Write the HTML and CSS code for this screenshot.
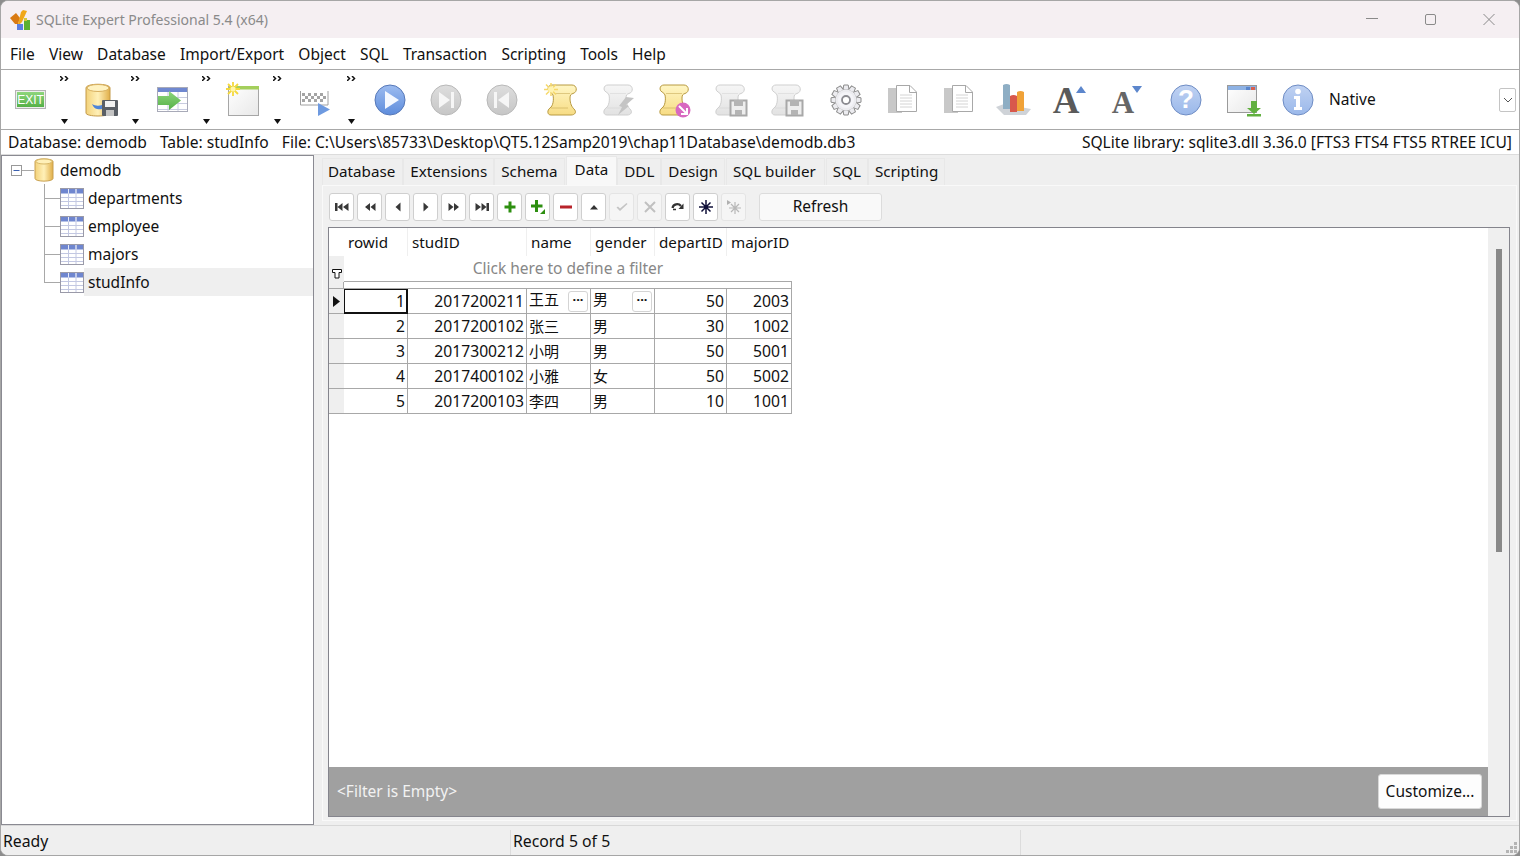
FILE: index.html
```html
<!DOCTYPE html>
<html lang="en">
<head>
<meta charset="utf-8">
<title>SQLite Expert Professional 5.4 (x64)</title>
<link rel="stylesheet" href="styles.css">
</head>
<body>
<svg class="defs" aria-hidden="true">
  <defs>
    <linearGradient id="gold" x1="0" y1="0" x2="1" y2="0"><stop offset="0" stop-color="#f3d27a"/><stop offset=".5" stop-color="#fff0b8"/><stop offset="1" stop-color="#e0ae48"/></linearGradient>
    <linearGradient id="paper" x1="0" y1="0" x2="0" y2="1"><stop offset="0" stop-color="#fff6c4"/><stop offset="1" stop-color="#f7dc84"/></linearGradient>
    <linearGradient id="ghost" x1="0" y1="0" x2="0" y2="1"><stop offset="0" stop-color="#f6f6f6"/><stop offset="1" stop-color="#e2e2e2"/></linearGradient>
    <linearGradient id="blueball" x1="0" y1="0" x2="0" y2="1"><stop offset="0" stop-color="#9dbcf0"/><stop offset="1" stop-color="#5d8cdc"/></linearGradient>
    <linearGradient id="lightball" x1="0" y1="0" x2="0" y2="1"><stop offset="0" stop-color="#c0d2f2"/><stop offset="1" stop-color="#9ab8ea"/></linearGradient>
    <linearGradient id="greyball" x1="0" y1="0" x2="0" y2="1"><stop offset="0" stop-color="#dedede"/><stop offset="1" stop-color="#c6c6c6"/></linearGradient>
    <linearGradient id="green" x1="0" y1="0" x2="0" y2="1"><stop offset="0" stop-color="#8ed67c"/><stop offset="1" stop-color="#55b048"/></linearGradient>
    <linearGradient id="win" x1="0" y1="0" x2="1" y2="1"><stop offset="0" stop-color="#ffffff"/><stop offset="1" stop-color="#e8e8e8"/></linearGradient>

    <symbol id="scroll" viewBox="0 0 40 40"><path d="M10 5H30C35 5 36 12 31 13.500C29 14 28 15 28 18C28 24 30 27 32 29C35 32 33 35 29 35H9C5 35 5 30 8 28C11 26 12 20 11 15C10 12 6 12 6 9C6 6 8 5 10 5Z"/><path d="M12 13.500H28M9 28H26" fill="none" stroke-opacity=".45"/></symbol>

    <path id="tooth" d="M17 9.500L17.800 5H22.200L23 9.500" fill="#ececf0" stroke="#8c8c8c"/>

    <symbol id="table16" viewBox="0 0 24 21">
      <rect x=".5" y=".5" width="23" height="20" fill="#fff" stroke="#9a9aa8"/>
      <rect x="1" y="1" width="22" height="4.500" fill="#6f86cf"/>
      <path d="M1 9.500H23M1 13.500H23M1 17.500H23" stroke="#c3c8e2"/>
      <path d="M8.500 1V20M16 1V20" stroke="#c3c8e2"/>
      <path d="M8.500 1V5.500M16 1V5.500" stroke="#e6ebf8"/>
    </symbol>

    <symbol id="nFirst" viewBox="0 0 14 14"><path d="M0 3h2.500v8H0zM7.500 3v8L2.500 7zM13.500 3v8L8 7z" fill="#383838"/></symbol>
    <symbol id="nPrevP" viewBox="0 0 14 14"><path d="M7 3v8L2 7zM12.500 3v8L7.500 7z" fill="#383838"/></symbol>
    <symbol id="nPrev" viewBox="0 0 14 14"><path d="M9.500 2.500v9L4.500 7z" fill="#383838"/></symbol>
    <symbol id="nNext" viewBox="0 0 14 14"><path d="M4.500 2.500v9L9.500 7z" fill="#383838"/></symbol>
    <symbol id="nNextP" viewBox="0 0 14 14"><path d="M1.500 3v8L6.500 7zM7 3v8l5-4z" fill="#383838"/></symbol>
    <symbol id="nLast" viewBox="0 0 14 14"><path d="M.5 3v8L6 7zM6.500 3v8l5-4zM11.500 3H14v8h-2.500z" fill="#383838"/></symbol>
    <symbol id="nPlus" viewBox="0 0 14 14"><path d="M5.500 1.500h3v4h4v3h-4v4h-3v-4h-4v-3h4z" fill="#2d8f10"/></symbol>
    <symbol id="nPlus2" viewBox="0 0 14 14"><path d="M4 0h3v4.500h4.500v3H7V12H4V7.500H-.5v-3H4z" fill="#2d8f10"/><path d="M14.500 8.500v5.500H9z" fill="#2d8f10"/></symbol>
    <symbol id="nMinus" viewBox="0 0 14 14"><path d="M1 5.500h12v3H1z" fill="#b8232a"/></symbol>
    <symbol id="nUp" viewBox="0 0 14 14"><path d="M3 9.500L7 5l4 4.500z" fill="#333"/></symbol>
    <symbol id="nCheck" viewBox="0 0 14 14"><path d="M1.500 7.500L5 11l7.500-7-1-1L5 8.500 3 6.500z" fill="#c4c4c4"/></symbol>
    <symbol id="nX" viewBox="0 0 14 14"><path d="M2 2l10 10M12 2L2 12" stroke="#c0c0c0" stroke-width="2"/></symbol>
    <symbol id="nRedo" viewBox="0 0 14 14"><path d="M1.500 8C2 4 7.500 3 10 6" fill="none" stroke="#333" stroke-width="2.200"/><path d="M12.500 3.500V9H7.500z" fill="#333"/><path d="M2 9.500h3" stroke="#333" stroke-width="1.500"/></symbol>
    <symbol id="nStar" viewBox="0 0 14 14"><path d="M7 0v14M0 7h14M2.500 2.500l9 9M11.500 2.500l-9 9" stroke="#10103a" stroke-width="1.500"/></symbol>
    <symbol id="nStar2" viewBox="0 0 14 14"><path d="M8 2v12M2 8h12M4 4l8 8M12 4l-8 8" stroke="#b8b8b8" stroke-width="1.200"/><path d="M0 0l4 2.500L0 5z" fill="#b0b0b0"/></symbol>
  </defs>
</svg>

<div class="window">
  <header class="titlebar">
    <svg class="logo" viewBox="0 0 20 20">
      <path d="M0 8L6 3l4 5-2 6-3 0z" fill="#d97a12"/>
      <path d="M8 14L11 2l2-2 4 1-5 11-3 3z" fill="#f0a818"/>
      <rect x="7" y="14" width="6" height="6" fill="#5a7fe0"/>
      <rect x="14" y="10" width="6" height="10" fill="#5cb030"/>
      <rect x="14" y="8" width="3" height="3" fill="#d8c838"/>
    </svg>
    <span class="title-text">SQLite Expert Professional 5.4 (x64)</span>
    <div class="winctl">
      <svg viewBox="0 0 58 20"><path d="M22 8.500H34" stroke="#8a8a8a"/></svg>
      <svg viewBox="0 0 58 20"><rect x="23.500" y="4.500" width="10" height="10" rx="1.500" fill="none" stroke="#8a8a8a"/></svg>
      <svg viewBox="0 0 58 20"><path d="M23.500 4l11 11M34.500 4l-11 11" stroke="#8a8a8a"/></svg>
    </div>
  </header>

  <nav class="menubar">
    <span>File</span><span>View</span><span>Database</span><span>Import/Export</span><span>Object</span><span>SQL</span><span>Transaction</span><span>Scripting</span><span>Tools</span><span>Help</span>
  </nav>

  <div class="toolbar">
    <div class="tbi">
      <div class="tbi-main">
        <svg class="ic" viewBox="0 0 40 40"><rect x="4.500" y="10.500" width="30" height="18" fill="#eee" stroke="#b4b4b4"/><rect x="6" y="12" width="27" height="15" fill="url(#green)"/><text x="19.500" y="24" class="exit-t">EXIT</text></svg>
      </div>
      <div class="tbi-side"><svg class="chev" viewBox="0 0 10 5"><path d="M0 0l2.500 2.500L0 5M5 0l2.500 2.500L5 5" fill="none" stroke="#111" stroke-width="1.500"/></svg><svg class="drop" viewBox="0 0 7 5"><path d="M0 0h7L3.500 5z" fill="#111"/></svg></div>
    </div>
    <div class="tbi">
      <div class="tbi-main">
        <svg class="ic" viewBox="0 0 40 40"><path d="M4 8c0-5 24-5 24 0v25c0 4-24 4-24 0z" fill="url(#gold)" stroke="#c49a48"/><ellipse cx="16" cy="8" rx="11" ry="3.500" fill="#fff2c0" stroke="#d8b060"/><path d="M10 24c2 5 6 6 10 5v3l6-5-6-5v3c-3 1-7 1-10-1z" fill="#4e84d8"/><rect x="20" y="20" width="16" height="16" rx="1" fill="#5a5f66"/><rect x="23" y="21" width="10" height="6" fill="#f2f2f2"/><rect x="24" y="30" width="8" height="6" fill="#c4c4c4"/></svg>
      </div>
      <div class="tbi-side"><svg class="chev" viewBox="0 0 10 5"><path d="M0 0l2.500 2.500L0 5M5 0l2.500 2.500L5 5" fill="none" stroke="#111" stroke-width="1.500"/></svg><svg class="drop" viewBox="0 0 7 5"><path d="M0 0h7L3.500 5z" fill="#111"/></svg></div>
    </div>
    <div class="tbi">
      <div class="tbi-main">
        <svg class="ic" viewBox="0 0 40 40"><rect x="4.500" y="7.500" width="30" height="24" fill="#fff" stroke="#a8aab8"/><rect x="5" y="8" width="29" height="4" fill="#7088d0"/><path d="M5 17.500H34M5 23.500H34M5 29.500H34M15 12V31M25 12V31" stroke="#c8cce0"/><path d="M5 16h11v-5l12 9.500L16 30v-5H5z" fill="url(#green)"/></svg>
      </div>
      <div class="tbi-side"><svg class="chev" viewBox="0 0 10 5"><path d="M0 0l2.500 2.500L0 5M5 0l2.500 2.500L5 5" fill="none" stroke="#111" stroke-width="1.500"/></svg><svg class="drop" viewBox="0 0 7 5"><path d="M0 0h7L3.500 5z" fill="#111"/></svg></div>
    </div>
    <div class="tbi">
      <div class="tbi-main">
        <svg class="ic" viewBox="0 0 40 40"><rect x="4.500" y="6.500" width="30" height="29" fill="url(#win)" stroke="#a6a6a6"/><rect x="5" y="6" width="30" height="3.500" fill="#a4cf5c"/><path d="M9 2v14M2 9h14M4 4l10 10M14 4L4 14" stroke="#f4d83c" stroke-width="1.800"/><circle cx="9" cy="9" r="2.500" fill="#fff6a8"/></svg>
      </div>
      <div class="tbi-side"><svg class="chev" viewBox="0 0 10 5"><path d="M0 0l2.500 2.500L0 5M5 0l2.500 2.500L5 5" fill="none" stroke="#111" stroke-width="1.500"/></svg><svg class="drop" viewBox="0 0 7 5"><path d="M0 0h7L3.500 5z" fill="#111"/></svg></div>
    </div>
    <div class="tbi tbi-wide">
      <div class="tbi-main">
        <svg class="ic" viewBox="0 0 40 40"><path d="M5.500 11v14H33V11" fill="#fff" stroke="#a0a0a0"/><path d="M7 13h3v3H7zM13 13h3v3h-3zM19 13h3v3h-3zM25 13h3v3h-3zM10 16h3v3h-3zM16 16h3v3h-3zM22 16h3v3h-3zM28 16h3v3h-3zM7 19h3v3H7zM13 19h3v3h-3zM19 19h3v3h-3zM25 19h3v3h-3z" fill="#a4a4a4"/><path d="M23 23l12 6.500L23 36z" fill="#6e9ae0"/></svg>
      </div>
      <div class="tbi-side"><svg class="chev" viewBox="0 0 10 5"><path d="M0 0l2.500 2.500L0 5M5 0l2.500 2.500L5 5" fill="none" stroke="#111" stroke-width="1.500"/></svg><svg class="drop" viewBox="0 0 7 5"><path d="M0 0h7L3.500 5z" fill="#111"/></svg></div>
    </div>

    <div class="tb first"><svg class="ic" viewBox="0 0 40 40"><circle cx="20" cy="20" r="15" fill="url(#blueball)" stroke="#5678b8"/><path d="M15 11l14 9-14 9z" fill="#f4f8ff"/></svg></div>
    <div class="tb"><svg class="ic" viewBox="0 0 40 40"><circle cx="20" cy="20" r="15" fill="url(#greyball)" stroke="#b8b8b8"/><path d="M13 12l11 8-11 8z" fill="#f6f6f6"/><rect x="25" y="12" width="3" height="16" fill="#f6f6f6"/></svg></div>
    <div class="tb"><svg class="ic" viewBox="0 0 40 40"><circle cx="20" cy="20" r="15" fill="url(#greyball)" stroke="#b8b8b8"/><path d="M27 12l-11 8 11 8z" fill="#f6f6f6"/><rect x="12" y="12" width="3" height="16" fill="#f6f6f6"/></svg></div>

    <div class="tb gap"><svg class="ic" viewBox="0 0 40 40"><use href="#scroll" fill="url(#paper)" stroke="#b89a40"/><path d="M9 3v13M2 9.500h14M4 4.500l10 10M14 4.500l-10 10" stroke="#f6d86a" stroke-width="1.500"/><circle cx="9" cy="9.500" r="3" fill="#fff3b0"/></svg></div>
    <div class="tb"><svg class="ic" viewBox="0 0 40 40"><use href="#scroll" fill="url(#ghost)" stroke="#cfcfcf"/><path d="M28 17l8 1-8 7 3 1-11 9 4-8-3-1z" fill="#c4c4c4"/></svg></div>
    <div class="tb"><svg class="ic" viewBox="0 0 40 40"><use href="#scroll" fill="url(#paper)" stroke="#b89a40"/><circle cx="29" cy="30" r="7.500" fill="#d868c0"/><path d="M25 26l8 8M33 28v6h-6" fill="none" stroke="#fff" stroke-width="2"/></svg></div>
    <div class="tb"><svg class="ic" viewBox="0 0 40 40"><use href="#scroll" fill="url(#ghost)" stroke="#cfcfcf"/><rect x="20.500" y="20.500" width="16" height="15" fill="#eee" stroke="#a8a8a8" stroke-width="2"/><rect x="24" y="20" width="9" height="6" fill="#b4b4b4"/><rect x="25" y="30" width="7" height="5" fill="#b4b4b4"/></svg></div>
    <div class="tb"><svg class="ic" viewBox="0 0 40 40"><use href="#scroll" fill="url(#ghost)" stroke="#cfcfcf"/><rect x="20.500" y="20.500" width="16" height="15" fill="#eee" stroke="#a8a8a8" stroke-width="2"/><rect x="24" y="20" width="9" height="6" fill="#b4b4b4"/><rect x="25" y="30" width="7" height="5" fill="#b4b4b4"/></svg></div>

    <div class="tb gap"><svg class="ic" viewBox="0 0 40 40">
      <circle cx="20" cy="20" r="11" fill="#ececf0" stroke="#8c8c8c"/>
      <use href="#tooth"/><use href="#tooth" transform="rotate(30 20 20)"/><use href="#tooth" transform="rotate(60 20 20)"/><use href="#tooth" transform="rotate(90 20 20)"/><use href="#tooth" transform="rotate(120 20 20)"/><use href="#tooth" transform="rotate(150 20 20)"/><use href="#tooth" transform="rotate(180 20 20)"/><use href="#tooth" transform="rotate(210 20 20)"/><use href="#tooth" transform="rotate(240 20 20)"/><use href="#tooth" transform="rotate(270 20 20)"/><use href="#tooth" transform="rotate(300 20 20)"/><use href="#tooth" transform="rotate(330 20 20)"/>
      <circle cx="20" cy="20" r="8" fill="#f4f4f8"/><circle cx="20" cy="20" r="4" fill="#fff" stroke="#8c8c92" stroke-width="1.800"/></svg></div>
    <div class="tb"><svg class="ic" viewBox="0 0 40 40"><rect x="6" y="8" width="14" height="25" fill="#c8c8c8"/><path d="M14.500 5.500H28L34.500 12V31.500H14.500z" fill="#fff" stroke="#a8a8a8"/><path d="M27.500 6V12.500H34" fill="none" stroke="#a8a8a8"/><path d="M18 15H30M18 18H30M18 21H30M18 24H30M18 27H30" stroke="#d4d4d4"/></svg></div>
    <div class="tb"><svg class="ic" viewBox="0 0 40 40"><rect x="6" y="8" width="14" height="25" fill="#c8c8c8"/><path d="M14.500 5.500H28L34.500 12V31.500H14.500z" fill="#fff" stroke="#a8a8a8"/><path d="M27.500 6V12.500H34" fill="none" stroke="#a8a8a8"/><path d="M18 15H30M18 18H30M18 21H30M18 24H30M18 27H30" stroke="#d4d4d4"/></svg></div>
    <div class="tb"><svg class="ic" viewBox="0 0 40 40"><path d="M2 27l8-3 27 5-5 6H10z" fill="#cfd3d8"/><path d="M9 5q3.500-2 7 0v24H9z" fill="#8eaec4"/><path d="M16 16q3.500-2 7 0v16h-7z" fill="#d8584c"/><path d="M23 12q3.500-2 7 0v19h-7z" fill="#f0a238"/></svg></div>
    <div class="tb tb-a"><svg class="ic" viewBox="0 0 40 40"><text x="16" y="33" class="a-big">A</text><path d="M26 13l5-7 5 7z" fill="#5c86cc"/></svg></div>
    <div class="tb tb-a"><svg class="ic" viewBox="0 0 40 40"><text x="17" y="33" class="a-small">A</text><path d="M26 6h10l-5 7z" fill="#5c86cc"/></svg></div>
    <div class="tb gap"><svg class="ic" viewBox="0 0 40 40"><circle cx="20" cy="20" r="15" fill="url(#lightball)" stroke="#6e8cc4"/><text x="20" y="28" class="q-t">?</text></svg></div>
    <div class="tb"><svg class="ic" viewBox="0 0 40 40"><rect x="5.500" y="5.500" width="29" height="27" fill="url(#win)" stroke="#9a9a9a"/><rect x="6" y="6" width="28" height="4" fill="#8eb2e4"/><rect x="24" y="7" width="4" height="3" fill="#5a86cc"/><rect x="29" y="7" width="4" height="3" fill="#d86050"/><path d="M29 21h6v7h4l-7 6-7-6h4z" fill="#62b040"/><rect x="25" y="34" width="14" height="2.500" fill="#62b040"/></svg></div>
    <div class="tb"><svg class="ic" viewBox="0 0 40 40"><circle cx="20" cy="20" r="15" fill="url(#lightball)" stroke="#6e8cc4"/><circle cx="20" cy="11.500" r="2.800" fill="#fff"/><path d="M16 16h6v11h2v3h-8v-3h2v-8h-2z" fill="#fff"/></svg></div>
    <span class="native">Native</span>
    <div class="combo-btn"><svg viewBox="0 0 10 6"><path d="M1 1l4 4 4-4" fill="none" stroke="#555"/></svg></div>
  </div>

  <div class="infobar">
    <span>Database: demodb</span><span>Table: studInfo</span><span>File: C:\Users\85733\Desktop\QT5.12Samp2019\chap11Database\demodb.db3</span>
    <span class="info-right">SQLite library: sqlite3.dll 3.36.0 [FTS3 FTS4 FTS5 RTREE ICU]</span>
  </div>

  <main class="main">
    <aside class="tree">
      <div class="tree-root">
        <span class="exp"><svg viewBox="0 0 11 11"><rect x=".5" y=".5" width="10" height="10" fill="#fff" stroke="#999"/><path d="M2.500 5.500h6" stroke="#3a5fb0"/></svg></span>
        <span class="exp-line"></span>
        <svg class="dbicon" viewBox="0 0 20 24"><path d="M1 3.500c0-3.500 18-3.500 18 0v17c0 3.500-18 3.500-18 0z" fill="url(#gold)" stroke="#c8a050"/><ellipse cx="10" cy="3.500" rx="8" ry="2.500" fill="#fff0b8" stroke="#d8b868"/></svg>
        <span class="tree-label">demodb</span>
      </div>
      <div class="tree-row"><span class="conn"></span><svg class="tblicon"><use href="#table16"/></svg><span class="tree-label">departments</span></div>
      <div class="tree-row"><span class="conn"></span><svg class="tblicon"><use href="#table16"/></svg><span class="tree-label">employee</span></div>
      <div class="tree-row"><span class="conn"></span><svg class="tblicon"><use href="#table16"/></svg><span class="tree-label">majors</span></div>
      <div class="tree-row is-last"><span class="conn"></span><svg class="tblicon"><use href="#table16"/></svg><span class="tree-label is-selected">studInfo</span></div>
    </aside>

    <section class="content">
      <div class="tabs">
        <span class="tab">Database</span><span class="tab">Extensions</span><span class="tab">Schema</span><span class="tab is-active">Data</span><span class="tab">DDL</span><span class="tab">Design</span><span class="tab tab-builder">SQL builder</span><span class="tab">SQL</span><span class="tab">Scripting</span>
      </div>
      <div class="panel">
        <div class="navbar">
          <button class="nb"><svg><use href="#nFirst"/></svg></button>
          <button class="nb"><svg><use href="#nPrevP"/></svg></button>
          <button class="nb"><svg><use href="#nPrev"/></svg></button>
          <button class="nb"><svg><use href="#nNext"/></svg></button>
          <button class="nb"><svg><use href="#nNextP"/></svg></button>
          <button class="nb"><svg><use href="#nLast"/></svg></button>
          <button class="nb"><svg><use href="#nPlus"/></svg></button>
          <button class="nb"><svg><use href="#nPlus2"/></svg></button>
          <button class="nb"><svg><use href="#nMinus"/></svg></button>
          <button class="nb"><svg><use href="#nUp"/></svg></button>
          <button class="nb off"><svg><use href="#nCheck"/></svg></button>
          <button class="nb off"><svg><use href="#nX"/></svg></button>
          <button class="nb"><svg><use href="#nRedo"/></svg></button>
          <button class="nb"><svg><use href="#nStar"/></svg></button>
          <button class="nb off"><svg><use href="#nStar2"/></svg></button>
          <button class="refresh">Refresh</button>
        </div>
        <div class="frame">
          <div class="gridcol">
            <div class="gridarea">
              <table class="grid">
                <colgroup><col class="c0"><col class="c1"><col class="c2"><col class="c3"><col class="c4"><col class="c5"><col class="c6"></colgroup>
                <thead>
                  <tr class="hdr"><th></th><th>rowid</th><th>studID</th><th>name</th><th>gender</th><th>departID</th><th>majorID</th></tr>
                </thead>
                <tbody>
                  <tr class="flt"><td class="ind"><svg class="funnel" viewBox="0 0 10 10"><path d="M.5 .5h9v3H7v5.500H3V3.500H.5z" fill="#fff" stroke="#111"/></svg></td><td colspan="6" class="flt-t">Click here to define a filter</td></tr>
                  <tr class="spc"><td class="ind"></td><td colspan="6"></td></tr>
                  <tr class="row"><td class="ind"><svg class="cur" viewBox="0 0 7 11"><path d="M0 0l7 5.500L0 11z" fill="#111"/></svg></td><td class="num is-cur">1</td><td class="num">2017200211</td><td class="txt">王五<span class="ell">···</span></td><td class="txt">男<span class="ell">···</span></td><td class="num">50</td><td class="num">2003</td></tr>
                  <tr class="row"><td class="ind"></td><td class="num">2</td><td class="num">2017200102</td><td class="txt">张三</td><td class="txt">男</td><td class="num">30</td><td class="num">1002</td></tr>
                  <tr class="row"><td class="ind"></td><td class="num">3</td><td class="num">2017300212</td><td class="txt">小明</td><td class="txt">男</td><td class="num">50</td><td class="num">5001</td></tr>
                  <tr class="row"><td class="ind"></td><td class="num">4</td><td class="num">2017400102</td><td class="txt">小雅</td><td class="txt">女</td><td class="num">50</td><td class="num">5002</td></tr>
                  <tr class="row"><td class="ind"></td><td class="num">5</td><td class="num">2017200103</td><td class="txt">李四</td><td class="txt">男</td><td class="num">10</td><td class="num">1001</td></tr>
                </tbody>
              </table>
            </div>
            <div class="filterbar"><span class="filter-t">&lt;Filter is Empty&gt;</span><button class="customize">Customize...</button></div>
          </div>
          <div class="vscroll"><div class="thumb"></div></div>
        </div>
      </div>
    </section>
  </main>

  <footer class="status">
    <span class="st st-a">Ready</span><span class="st st-b">Record 5 of 5</span><span class="st st-c"></span>
    <svg class="grip" viewBox="0 0 12 12"><path d="M8 0h3v3H8zM4 4h3v3H4zM8 4h3v3H8zM0 8h3v3H0zM4 8h3v3H4zM8 8h3v3H8z" fill="#b4b4b4"/></svg>
  </footer>
</div>
</body>
</html>
```
FILE: styles.css
```css
* { box-sizing: border-box; }
html, body { margin: 0; padding: 0; height: 100%; }
body {
  width: 1520px; height: 856px; overflow: hidden; background: #8d8d8d;
  font-family: "Noto Sans", "Noto Sans CJK SC", "Liberation Sans", sans-serif;
  font-size: 15.5px; color: #111;
}
.defs { display: block; width: 0; height: 0; }
.window {
  width: 1520px; height: 856px; display: flex; flex-direction: column;
  border: 1px solid #a6a6a6; border-radius: 8px; overflow: hidden; background: #efefef;
}

/* title bar */
.titlebar { height: 37px; flex: none; display: flex; align-items: center; padding-left: 9px; background: #f5eff2; }
.logo { width: 20px; height: 20px; flex: none; }
.title-text { margin-left: 6px; font-size: 14px; color: #8a8a8a; }
.winctl { margin-left: auto; margin-right: 1px; display: flex; }
.winctl svg { width: 58px; height: 20px; display: block; }

/* menu */
.menubar { height: 32px; flex: none; display: flex; align-items: center; gap: 14.2px; padding: 1px 0 0 9px; background: #fff; border-bottom: 1px solid #a8a8a8; }

/* toolbar */
.toolbar { height: 60px; flex: none; display: flex; align-items: center; background: #fff; border-bottom: 1px solid #a8a8a8; }
.tbi { width: 71px; height: 59px; flex: none; display: flex; }
.tbi-wide { width: 75px; }
.tbi-wide .tbi-side { margin-left: 3px; }
.tbi-main { width: 60px; display: flex; align-items: center; justify-content: center; }
.tbi-side { width: 7px; display: flex; flex-direction: column; justify-content: space-between; align-items: center; padding: 6px 0 5px; }
.chev { width: 10px; height: 5px; display: block; flex: none; }
.drop { width: 7px; height: 5px; display: block; flex: none; }
.tb { width: 56px; flex: none; display: flex; justify-content: center; }
.tb.first { margin-left: 2px; }
.tb.gap { margin-left: 4px; }
.ic { width: 40px; height: 40px; display: block; overflow: visible; }
.exit-t { font: 12px "Liberation Sans", sans-serif; fill: #fff; text-anchor: middle; }
.a-big { font: bold 37px "Liberation Serif", serif; fill: #5a5a5a; text-anchor: middle; }
.a-small { font: bold 31px "Liberation Serif", serif; fill: #666; text-anchor: middle; }
.q-t { font: bold 26px "Liberation Sans", sans-serif; fill: #fff; text-anchor: middle; }
.native { margin-left: 3px; padding-bottom: 2px; }
.combo-btn { margin-left: auto; margin-right: 3px; width: 17px; height: 24px; border: 1px solid #c4c4c4; border-radius: 2px; display: flex; align-items: center; justify-content: center; }
.combo-btn svg { width: 10px; height: 6px; display: block; }

/* info bar */
.infobar { height: 25px; flex: none; display: flex; align-items: center; gap: 13px; padding: 0 7px; background: #fff; border-bottom: 1px solid #dcdcdc; font-size: 15.6px; }
.info-right { margin-left: auto; }

/* main */
.main { flex: 1; min-height: 0; display: flex; }

/* tree */
.tree { width: 313px; flex: none; background: #fff; border: 1px solid #8a8a92; }
.tree-root { height: 28px; display: flex; align-items: center; padding-left: 9px; }
.exp { width: 11px; height: 11px; flex: none; }
.exp svg { width: 11px; height: 11px; display: block; }
.exp-line { width: 12px; height: 1px; background: #a8a8a8; flex: none; }
.dbicon { width: 20px; height: 24px; flex: none; }
.tree-root .tree-label { margin-left: 4px; }
.tree-row { height: 28px; display: flex; align-items: center; padding-left: 42px; }
.conn {
  width: 16px; height: 28px; flex: none;
  background:
    linear-gradient(#a8a8a8, #a8a8a8) 0 0 / 1px 100% no-repeat,
    linear-gradient(#a8a8a8, #a8a8a8) 0 14px / 100% 1px no-repeat;
}
.is-last .conn {
  background:
    linear-gradient(#a8a8a8, #a8a8a8) 0 0 / 1px 15px no-repeat,
    linear-gradient(#a8a8a8, #a8a8a8) 0 14px / 100% 1px no-repeat;
}
.tblicon { width: 24px; height: 21px; flex: none; margin-right: 2px; }
.tree-label { display: block; line-height: 28px; padding: 0 3px 0 2px; }
.tree-label.is-selected { flex: 1; background: #efefef; height: 28px; margin-left: -2px; padding-left: 4px; }

/* content */
.content { flex: 1; min-width: 0; margin: 0 2px 4px 8px; display: flex; flex-direction: column; }
.tabs { height: 30px; flex: none; display: flex; align-items: flex-end; font-size: 15.2px; }
.tab { height: 27px; padding: 0 6px; line-height: 25px; background: #efefef; border: 1px solid #e8e8e8; border-bottom: 0; }
.tab:first-child { padding-left: 5px; padding-right: 7px; }
.tab-builder { margin-left: 1px; padding-right: 8px; }
.tab-builder + .tab { margin-left: 1px; }
.tab.is-active { height: 29px; line-height: 25px; background: #f8f8f8; padding: 0 8px; margin-left: 1px; }
.panel { flex: 1; min-height: 0; display: flex; flex-direction: column; padding: 7px 6px 3px 5px; background: #f0f0f0; border: 1px solid #f9f9f9; }
.navbar { height: 28px; flex: none; display: flex; gap: 3px; margin-left: 1px; margin-bottom: 6px; }
.nb { width: 25px; height: 28px; padding: 0; border: 1px solid #cfcfcf; border-radius: 3px; background: #fff; display: flex; align-items: center; justify-content: center; }
.nb svg { width: 14px; height: 14px; display: block; overflow: visible; }
.nb.off { background: #f5f5f5; border-color: #e4e4e4; }
.refresh { width: 123px; height: 28px; margin-left: 10px; padding: 0 0 2px; border: 1px solid #dcdcdc; border-radius: 3px; background: #f9f9f9; font: inherit; color: #111; }

.frame { flex: 1; min-height: 0; display: flex; background: #fff; border: 1px solid #84848c; }
.gridcol { flex: 1; min-width: 0; display: flex; flex-direction: column; }
.gridarea { flex: 1; min-height: 0; }
.grid { border-collapse: separate; border-spacing: 0; table-layout: fixed; width: 463px; }
.c0 { width: 15px; }
.c1 { width: 64px; }
.c2 { width: 119px; }
.c3, .c4 { width: 64px; }
.c5 { width: 72px; }
.c6 { width: 65px; }
.grid th, .grid td { padding: 0; }
.hdr th { height: 28px; font-weight: 400; font-size: 15.2px; text-align: left; padding: 0 0 0 4px; border-right: 1px solid #efefef; }
.hdr th:first-child, .hdr th:last-child { border-right: 0; }
.flt td { height: 26px; }
.flt-t { text-align: center; color: #878787; border-bottom: 1px solid #a8a8a8; padding-bottom: 2px !important; }
.ind { background: #efefef; border-right: 1px solid #a8a8a8; border-bottom: 1px solid #a8a8a8; text-align: center; line-height: 0; }
.flt .ind { vertical-align: bottom; border-right: 0; border-bottom: 0; }
.funnel { width: 10px; height: 10px; margin-bottom: 3px; }
.spc td { height: 7px; border-bottom: 1px solid #a8a8a8; border-right: 1px solid #a8a8a8; line-height: 0; font-size: 0; }
.row td { height: 25px; border-right: 1px solid #a8a8a8; border-bottom: 1px solid #a8a8a8; line-height: 18px; white-space: nowrap; }
.row td.ind { border-right: 0; }
.cur { width: 7px; height: 11px; }
.num { text-align: right; padding-right: 2px !important; font-size: 15.7px; }
.txt { padding-left: 2px !important; font-size: 15px; }
.row td.is-cur { box-shadow: inset 0 0 0 1px #111; border-color: #111; }
.ell { float: right; width: 20px; height: 21px; margin: 1px 2px 0 0; border: 1px solid #d4d4d4; border-radius: 3px; background: #fff; text-align: center; font-weight: 700; font-size: 13px; line-height: 15px; }
.filterbar { height: 49px; flex: none; display: flex; align-items: center; justify-content: space-between; padding: 0 6px 0 8px; background: #a0a0a0; color: #f2f2f2; }
.filter-t { padding-bottom: 2px; }
.customize { width: 104px; height: 35px; padding: 0 0 1px; border: 1px solid #d8d8d8; border-radius: 3px; background: #fdfdfd; font: inherit; color: #111; }
.vscroll { width: 21px; flex: none; background: #efefef; padding: 21px 0 0 8px; }
.thumb { width: 6px; height: 303px; background: #888; }

/* status */
.status { height: 30px; flex: none; display: flex; align-items: stretch; border-top: 1px solid #d8d8d8; background: #efefef; position: relative; font-size: 15.8px; }
.st { display: flex; align-items: center; padding-left: 2px; }
.st-a { width: 509px; }
.st-b { width: 510px; border-left: 1px solid #dcdcdc; padding-left: 2px; margin-top: 4px; padding-bottom: 4px; }
.st-c { flex: 1; border-left: 1px solid #dcdcdc; margin-top: 4px; }
.grip { position: absolute; right: 1px; bottom: 1px; width: 12px; height: 12px; }
```
